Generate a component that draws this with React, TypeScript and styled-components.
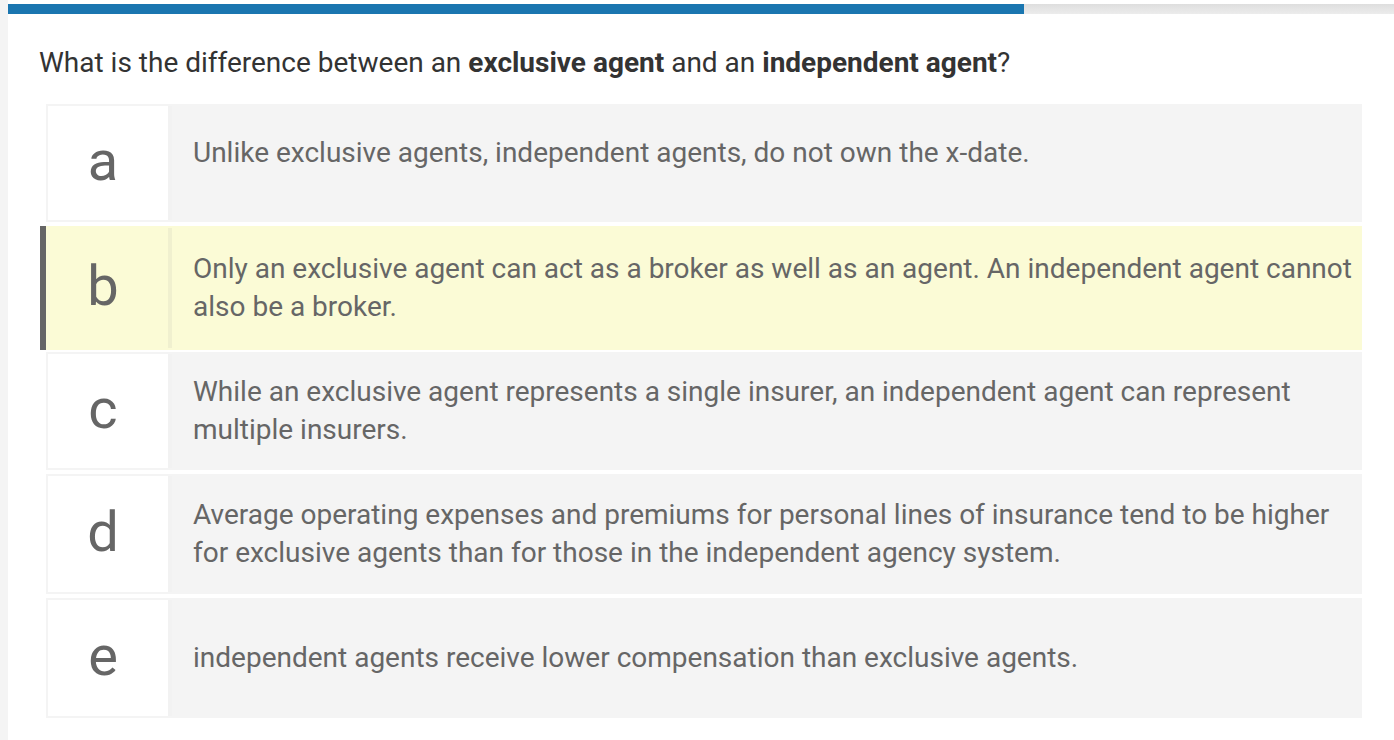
import React from "react";
import styled, { createGlobalStyle } from "styled-components";

const Global = createGlobalStyle`
  html, body { margin: 0; padding: 0; }
  body {
    background: #f4f4f4;
    font-family: Roboto, "Liberation Sans", Arial, sans-serif;
  }
`;

const Page = styled.div`
  margin-left: 8px;
  min-height: 740px;
  background: #ffffff;
  padding-top: 4px;
  box-sizing: border-box;
`;

const Progress = styled.div`
  height: 10px;
  background: linear-gradient(#dedede, #ececec);
  display: flex;
`;

const ProgressFill = styled.div`
  height: 100%;
  background: #1a76b0;
`;

const Question = styled.h1`
  margin: 0;
  padding: 32px 0 0 31px;
  font-size: 28px;
  line-height: 34px;
  font-weight: 400;
  color: #333333;
  strong { font-weight: 700; }
`;

const Options = styled.div`
  display: flex;
  flex-direction: column;
  gap: 4px;
  padding: 24px 32px 0 32px;
`;

const Row = styled.div<{ $selected?: boolean; $h: number }>`
  display: flex;
  min-height: ${(p) => p.$h}px;
  padding: 2px 0;
  box-sizing: border-box;
  background: ${(p) => (p.$selected ? "#fbfbd6" : "#f4f4f4")};
  border-left: 6px solid ${(p) => (p.$selected ? "#666666" : "#ffffff")};
  margin-bottom: ${(p) => (p.$selected ? "-2px" : "0")};
`;

const Letter = styled.div<{ $selected?: boolean }>`
  width: 124px;
  flex: none;
  margin-left: 2px;
  display: flex;
  align-items: center;
  justify-content: center;
  background: ${(p) => (p.$selected ? "transparent" : "#ffffff")};
  background-clip: padding-box;
  border-right: 4px solid ${(p) => (p.$selected ? "#f0f0cf" : "#f2f2f2")};
  font-size: 56px;
  color: #666666;
  padding: 0 10px 4px 0;
  box-sizing: border-box;
`;

const Text = styled.div<{ $trail?: number }>`
  flex: 1;
  display: flex;
  align-items: center;
  padding: 0 10px 0 21px;
  padding-bottom: ${(p) => p.$trail || 0}px;
  font-size: 28px;
  line-height: 38px;
  color: #666666;
`;

const options = [
  { l: "a", t: "Unlike exclusive agents, independent agents, do not own the x-date.", h: 118, trail: 20 },
  { l: "b", t: "Only an exclusive agent can act as a broker as well as an agent. An independent agent cannot also be a broker.", h: 124, sel: true },
  { l: "c", t: "While an exclusive agent represents a single insurer, an independent agent can represent multiple insurers.", h: 118 },
  { l: "d", t: "Average operating expenses and premiums for personal lines of insurance tend to be higher for exclusive agents than for those in the independent agency system.", h: 120 },
  { l: "e", t: "independent agents receive lower compensation than exclusive agents.", h: 120 },
];

export default function App() {
  return (
    <>
      <Global />
      <Page>
        <Progress>
          <ProgressFill style={{ width: "73.3%" }} />
        </Progress>
        <Question>
          What is the difference between an <strong>exclusive agent</strong> and an <strong>independent agent</strong>?
        </Question>
        <Options>
          {options.map((o) => (
            <Row key={o.l} $selected={o.sel} $h={o.h}>
              <Letter $selected={o.sel}>{o.l}</Letter>
              <Text $trail={o.trail}>{o.t}</Text>
            </Row>
          ))}
        </Options>
      </Page>
    </>
  );
}
